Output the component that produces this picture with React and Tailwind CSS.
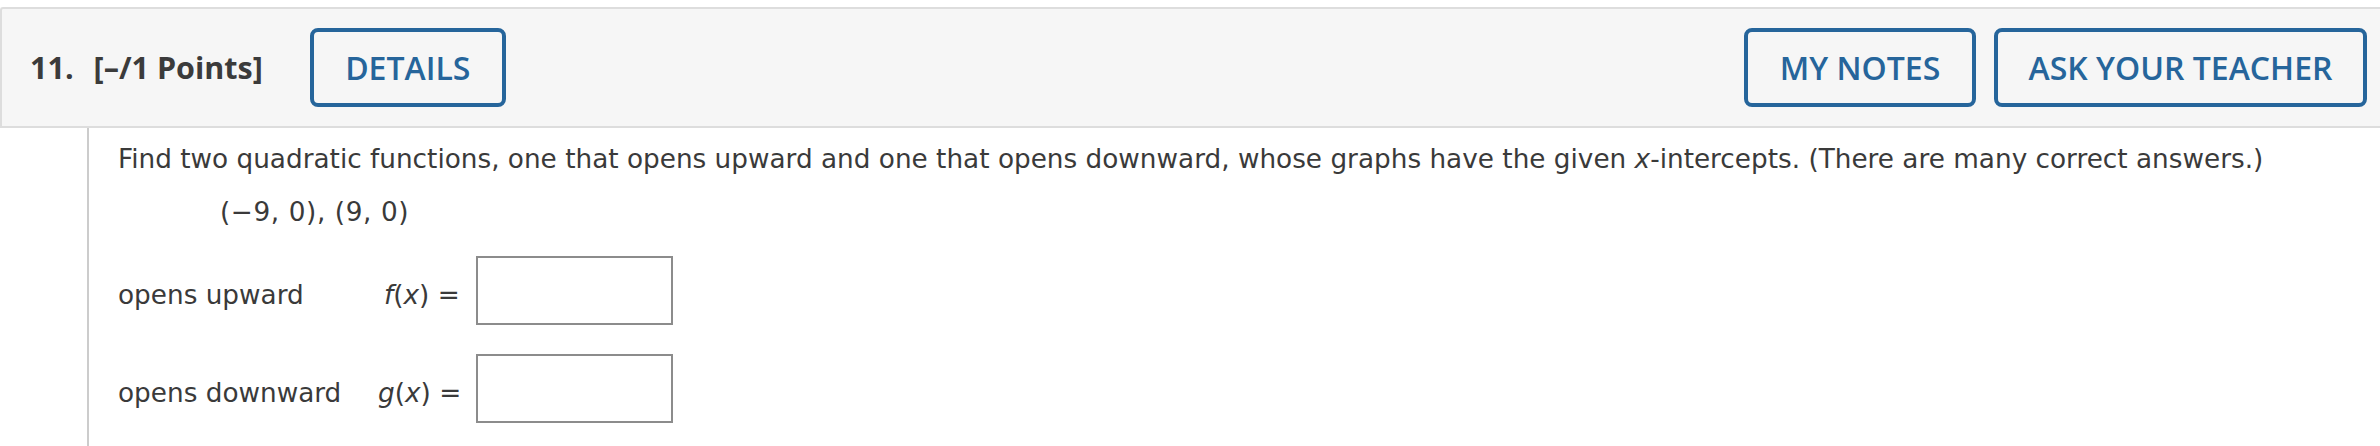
export default function App() {
  return (
    <div className="w-[2380px] h-[446px] bg-white overflow-hidden">
      <div className="mt-[7px] h-[121px] border-y-2 border-l-2 border-[#dddddd] rounded-tl-[3px] bg-[#f6f6f6] flex items-center pl-[28px] pr-[13px] font-['Open_Sans',sans-serif]">
        <span className="text-[30.5px] font-bold text-[#3b3b3b]">11.</span>
        <span className="ml-[20px] text-[30.5px] font-bold text-[#3b3b3b]">[–/1 Points]</span>
        <button className="ml-[47px] w-[196px] h-[79px] border-[4px] border-[#26659b] rounded-[8px] text-[32px] font-semibold text-[#26659b] flex items-center justify-center">
          DETAILS
        </button>
        <div className="flex-1" />
        <button className="w-[232px] h-[79px] border-[4px] border-[#26659b] rounded-[8px] text-[32px] font-semibold text-[#26659b] flex items-center justify-center">
          MY NOTES
        </button>
        <button className="ml-[18px] w-[373px] h-[79px] border-[4px] border-[#26659b] rounded-[8px] text-[32px] font-semibold text-[#26659b] flex items-center justify-center">
          ASK YOUR TEACHER
        </button>
      </div>
      <div className="flex h-[318px]">
        <div className="w-[87px] shrink-0" />
        <div className="flex-1 border-l-2 border-[#cccccc] pl-[29px] font-['DejaVu_Sans',sans-serif] text-[26.3px] leading-[32px] text-[#3a3a3a]">
          <p className="pt-[15px] whitespace-nowrap">
            Find two quadratic functions, one that opens upward and one that opens downward, whose graphs have the given <i>x</i>-intercepts. (There are many correct answers.)
          </p>
          <p className="mt-[21px] ml-[102px] tracking-[0.6px]">(−9, 0), (9, 0)</p>
          <div className="mt-[28px] flex items-center h-[69px]">
            <span className="w-[262px] shrink-0 mt-[8px]">opens upward</span>
            <span className="w-[96px] shrink-0 pl-[4px] mt-[8px]">
              <i>f</i>(<i>x</i>) =
            </span>
            <div className="w-[197px] h-[69px] border-2 border-[#8c8c8c] bg-white" />
          </div>
          <div className="mt-[29px] flex items-center h-[69px]">
            <span className="w-[260px] shrink-0 mt-[8px]">opens downward</span>
            <span className="w-[98px] shrink-0 mt-[8px]">
              <i>g</i>(<i>x</i>) =
            </span>
            <div className="w-[197px] h-[69px] border-2 border-[#8c8c8c] bg-white" />
          </div>
        </div>
      </div>
    </div>
  );
}
